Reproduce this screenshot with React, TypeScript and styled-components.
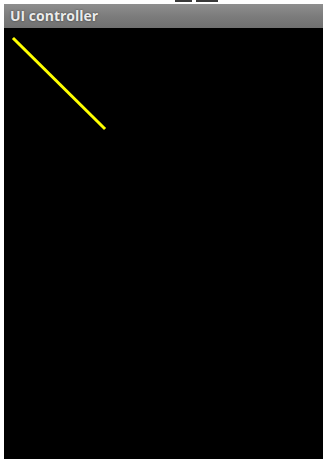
import React from "react";
import styled, { createGlobalStyle } from "styled-components";

const Global = createGlobalStyle`
  html, body { margin: 0; padding: 0; background: #ffffff; }
  #root { width: 327px; height: 463px; }
`;

const Frame = styled.div`
  width: 327px;
  height: 463px;
  box-sizing: border-box;
  padding: 0 4px 4px 4px;
  display: flex;
  flex-direction: column;
  background: #ffffff;
`;

const StatusStrip = styled.div`
  height: 4px;
  display: flex;
  align-items: flex-start;
  gap: 4px;
  padding-left: 171px;
`;

const StatusMark = styled.div<{ $w: number }>`
  width: ${(p) => p.$w}px;
  height: 2px;
  background: #3a3a3a;
`;

const TitleBar = styled.div`
  height: 24px;
  display: flex;
  align-items: center;
  padding-left: 6px;
  background: linear-gradient(to bottom, #8e8e8e 0%, #7c7c7c 50%, #707070 100%);
`;

const Title = styled.span`
  font-family: "Open Sans", "Noto Sans", sans-serif;
  font-weight: bold;
  font-size: 14px;
  line-height: 1;
  color: #ebebeb;
  text-shadow: 0 0 2px rgba(0, 0, 0, 0.6);
`;

const Canvas = styled.div`
  flex: 1;
  background: #000000;
`;

const Drawing = styled.svg`
  display: block;
`;

export default function App() {
  return (
    <>
      <Global />
      <Frame>
        <StatusStrip>
          <StatusMark $w={17} />
          <StatusMark $w={22} />
        </StatusStrip>
        <TitleBar>
          <Title>UI controller</Title>
        </TitleBar>
        <Canvas>
          <Drawing width="319" height="431" viewBox="0 0 319 431">
            <line x1="10" y1="11" x2="100" y2="100" stroke="#ffff00" strokeWidth="3" strokeLinecap="square" />
          </Drawing>
        </Canvas>
      </Frame>
    </>
  );
}
